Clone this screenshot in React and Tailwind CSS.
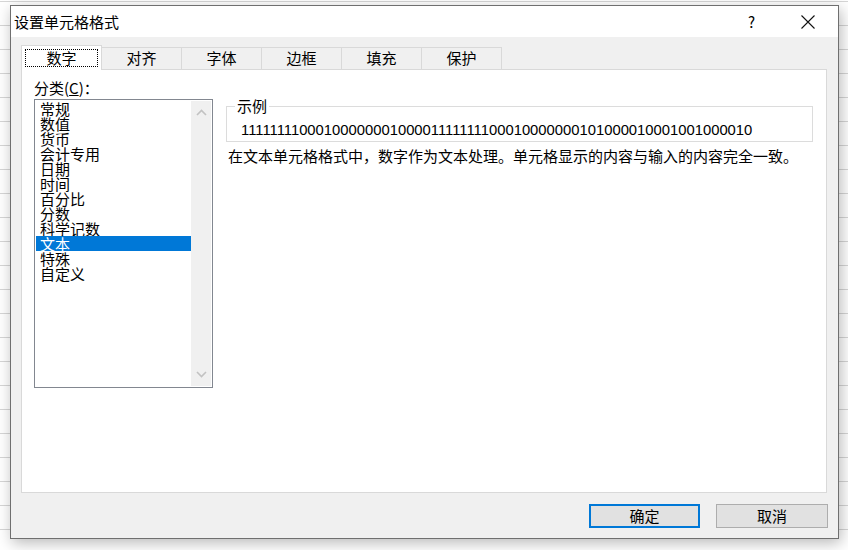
import React from 'react';

const categories = ['常规', '数值', '货币', '会计专用', '日期', '时间', '百分比', '分数', '科学记数', '文本', '特殊', '自定义'];
const tabs = ['数字', '对齐', '字体', '边框', '填充', '保护'];
const sample = '1111111100010000000100001111111100010000000101000010001001000010';

const Chevron = ({ down }) => (
    <svg width="11" height="7" viewBox="0 0 11 7" className="block">
        <polyline
            points={down ? '1,1 5.5,5.5 10,1' : '1,6 5.5,1.5 10,6'}
            fill="none"
            stroke="#c2c2c2"
            strokeWidth="1.6"
        />
    </svg>
);

const App = () => {
    return (
        <div className="w-[848px] h-[550px] overflow-hidden bg-white bg-[repeating-linear-gradient(to_bottom,#d6d6d6_0,#d6d6d6_1px,transparent_1px,transparent_24px)] bg-[position:0_1px] font-['Noto_Sans_CJK_SC',sans-serif] text-black">
            <div className="ml-[10px] mt-[5px] w-[829px] h-[534px] border border-[#6f6f6f] bg-[#f0f0f0] flex flex-col shadow-[2px_4px_14px_rgba(0,0,0,0.28)]">
                {/* title bar */}
                <div className="h-[31px] bg-white flex items-center pl-[3px] text-[15px] leading-5">
                    <span>设置单元格格式</span>
                    <span className="ml-auto mr-[46px] text-[15px]">?</span>
                    <svg width="14" height="14" viewBox="0 0 14 14" className="mr-[23px]">
                        <path d="M0.5 0.5 L13.5 13.5 M13.5 0.5 L0.5 13.5" stroke="#111" strokeWidth="1.1" />
                    </svg>
                </div>

                <div className="flex-1 flex flex-col pl-[10px] pr-[10px] pt-[8px]">
                    {/* tabs */}
                    <div className="flex items-end h-[24px] text-[15px]">
                        {tabs.map((t, i) =>
                            i === 0 ? (
                                <div key={t} className="relative z-10 -mb-px w-[81px] h-[25px] bg-white border border-b-0 border-[#d9d9d9] p-[3px]">
                                    <div className="h-full border border-dotted border-black flex items-center justify-center leading-5">{t}</div>
                                </div>
                            ) : (
                                <div key={t} className="w-[80px] h-[22px] border border-l-0 border-b-0 border-[#d9d9d9] bg-[#f0f0f0] flex items-center justify-center leading-5 pb-px">
                                    {t}
                                </div>
                            )
                        )}
                    </div>

                    {/* panel */}
                    <div className="w-[806px] h-[424px] bg-white border border-[#d9d9d9] flex">
                        <div className="pl-[12px] pt-[8px] flex flex-col">
                            <div className="text-[15px] leading-5">
                                分类(<span className="underline">C</span>)：
                            </div>
                            <div className="mt-[1px] w-[179px] h-[289px] border border-[#828790] p-px flex">
                                <div className="flex-1 flex flex-col text-[15px]">
                                    {categories.map((c) => (
                                        <div
                                            key={c}
                                            className={`h-[15px] leading-[15px] pl-[4px] ${c === '文本' ? 'bg-[#0078d7] text-white' : ''}`}
                                        >
                                            {c}
                                        </div>
                                    ))}
                                </div>
                                <div className="w-[20px] bg-[#f0f0f0] flex flex-col items-center justify-between py-[8px]">
                                    <Chevron />
                                    <Chevron down />
                                </div>
                            </div>
                        </div>

                        <div className="ml-[13px] pt-[26px] w-[587px] flex flex-col">
                            <fieldset className="border border-[#dcdcdc] pb-[2px]">
                                <legend className="ml-[8px] px-[2px] text-[15px] leading-5">示例</legend>
                                <div className="mt-[5px] pl-[14px] font-['Liberation_Sans',sans-serif] text-[14.8px] leading-[18px]">{sample}</div>
                            </fieldset>
                            <p className="mt-[4px] ml-[2px] text-[15px] leading-5 whitespace-nowrap">
                                在文本单元格格式中，数字作为文本处理。单元格显示的内容与输入的内容完全一致。
                            </p>
                        </div>
                    </div>

                    {/* buttons */}
                    <div className="mt-[11px] flex justify-end gap-[16px] text-[15px]">
                        <button className="w-[111px] h-[24px] border-2 border-[#0078d7] bg-[#e1e1e1] leading-5">确定</button>
                        <button className="w-[112px] h-[24px] border border-[#adadad] bg-[#e1e1e1] leading-5">取消</button>
                    </div>
                </div>
            </div>
        </div>
    );
};

export default App;
